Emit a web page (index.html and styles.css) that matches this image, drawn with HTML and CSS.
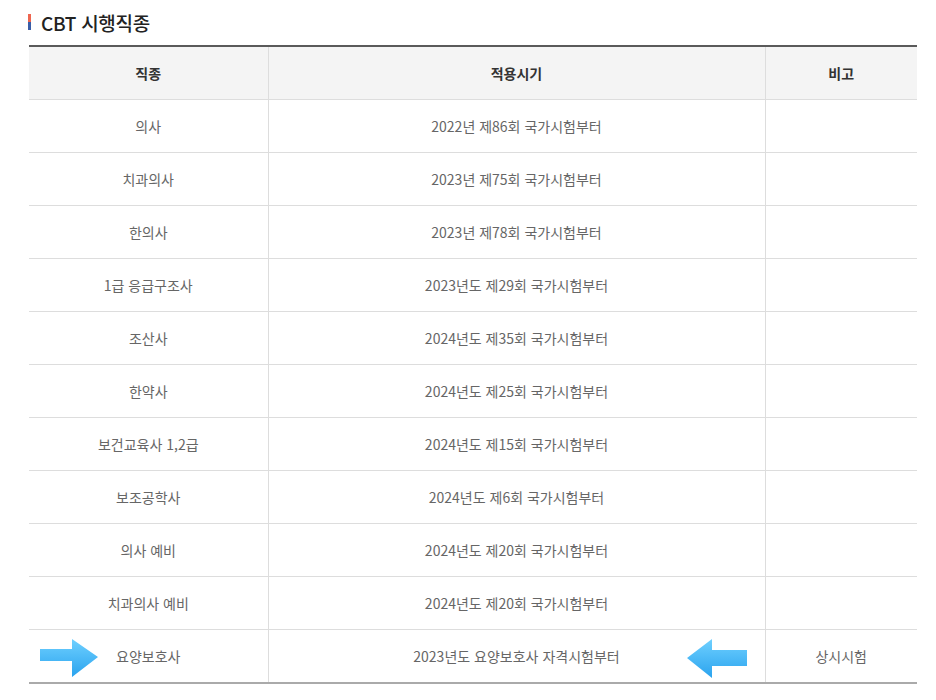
FILE: index.html
```html
<!DOCTYPE html>
<html lang="ko">
<head>
<meta charset="utf-8">
<link rel="stylesheet" href="styles.css">
</head>
<body>
<div class="wrap">
  <h2 class="title"><span class="bar"></span>CBT 시행직종</h2>
  <table class="tbl">
    <colgroup><col class="c1"><col class="c2"><col class="c3"></colgroup>
    <thead>
      <tr><th>직종</th><th>적용시기</th><th>비고</th></tr>
    </thead>
    <tbody>
      <tr><td>의사</td><td>2022년 제86회 국가시험부터</td><td></td></tr>
      <tr><td>치과의사</td><td>2023년 제75회 국가시험부터</td><td></td></tr>
      <tr><td>한의사</td><td>2023년 제78회 국가시험부터</td><td></td></tr>
      <tr><td>1급 응급구조사</td><td>2023년도 제29회 국가시험부터</td><td></td></tr>
      <tr><td>조산사</td><td>2024년도 제35회 국가시험부터</td><td></td></tr>
      <tr><td>한약사</td><td>2024년도 제25회 국가시험부터</td><td></td></tr>
      <tr><td>보건교육사 1,2급</td><td>2024년도 제15회 국가시험부터</td><td></td></tr>
      <tr><td>보조공학사</td><td>2024년도 제6회 국가시험부터</td><td></td></tr>
      <tr><td>의사 예비</td><td>2024년도 제20회 국가시험부터</td><td></td></tr>
      <tr><td>치과의사 예비</td><td>2024년도 제20회 국가시험부터</td><td></td></tr>
      <tr class="last">
        <td class="rel">
          <svg class="arrow arrow-r" width="62" height="42" viewBox="0 0 62 42">
            <defs>
              <linearGradient id="g1" x1="0" y1="0" x2="0" y2="1">
                <stop offset="0" stop-color="#6fd0ff"/>
                <stop offset="1" stop-color="#2aa3ee"/>
              </linearGradient>
            </defs>
            <polygon points="1,11 33,11 33,1 59,19 33,39 33,23 1,23" fill="url(#g1)"/>
          </svg>
          요양보호사
        </td>
        <td class="rel">2023년도 요양보호사 자격시험부터
          <svg class="arrow arrow-l" width="62" height="42" viewBox="0 0 62 42">
            <defs>
              <linearGradient id="g2" x1="0" y1="0" x2="0" y2="1">
                <stop offset="0" stop-color="#6fd0ff"/>
                <stop offset="1" stop-color="#2aa3ee"/>
              </linearGradient>
            </defs>
            <polygon points="1,20 26,1 26,12 61,12 61,28 26,28 26,40" fill="url(#g2)"/>
          </svg>
        </td>
        <td>상시시험</td>
      </tr>
    </tbody>
  </table>
</div>
</body>
</html>
```
FILE: styles.css
```css
* { box-sizing: border-box; }
html, body { margin: 0; padding: 0; background: #fff; }
body {
  font-family: "Noto Sans CJK KR", "Noto Sans", sans-serif;
  color: #666;
}
.wrap {
  width: 888px;
  margin-left: 29px;
  padding-top: 9px;
}
.title {
  display: flex;
  align-items: center;
  margin: 0 0 10px -1px;
  height: 26px;
  font-size: 19px;
  font-weight: 500;
  color: #222;
  letter-spacing: -0.3px;
}
.bar {
  width: 3px;
  height: 16px;
  margin-right: 10px;
  background: linear-gradient(#ee6650 0, #ee6650 50%, #3a5ea8 50%, #3a5ea8 100%);
}
.tbl {
  width: 888px;
  border-collapse: collapse;
  table-layout: fixed;
  border-top: 2px solid #5a5a5a;
  border-bottom: 2px solid #aaa;
  font-size: 14px;
}
.c1 { width: 239px; }
.c2 { width: 497px; }
.c3 { width: 152px; }
.tbl th {
  height: 53px;
  background: #f4f4f4;
  color: #333;
  font-weight: 700;
  font-size: 14px;
  border-bottom: 1px solid #ddd;
  border-left: 1px solid #ddd;
  padding: 0;
}
.tbl td {
  height: 53.1px;
  text-align: center;
  border-bottom: 1px solid #ddd;
  border-left: 1px solid #ddd;
  padding: 0;
  color: #666;
}
.tbl th:first-child, .tbl td:first-child { border-left: 0; }
.tbl tr.last td { border-bottom: 0; }
.rel { position: relative; }
.arrow { position: absolute; top: 8px; }
.arrow-r { left: 10px; }
.arrow-l { right: 17px; }
```
